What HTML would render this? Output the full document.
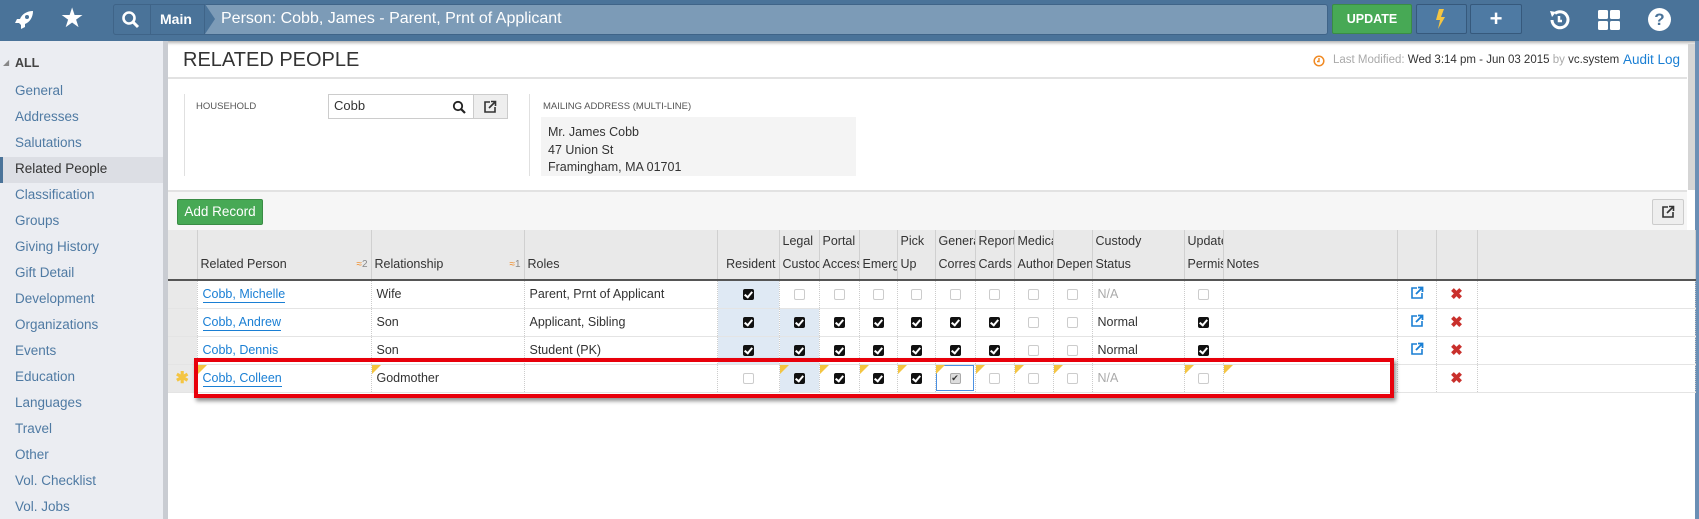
<!DOCTYPE html>
<html><head><meta charset="utf-8">
<style>
*{box-sizing:border-box;margin:0;padding:0}
body{width:1699px;height:519px;overflow:hidden;background:#fff;font-family:"Liberation Sans",sans-serif;font-size:12px;color:#333;position:relative}
.abs{position:absolute}
#top{left:0;top:0;width:1699px;height:41px;background:#4a7399;box-shadow:0 2px 3px rgba(0,0,0,.3)}
#crumb{left:113px;top:4px;width:1215px;height:31px;background:#7c9bb7;border:1px solid #3f6488;border-radius:3px}
#side{left:0;top:41px;width:163px;height:478px;background:#ebedf2}
#sideb{left:163px;top:41px;width:5px;height:478px;background:#c9ccd2}
.si{position:absolute;left:15px;font-size:13.5px;color:#4f7aa3}
table{border-collapse:collapse;table-layout:fixed;position:absolute;left:168px;top:230px;width:1527px}
td{height:28px;border-right:1px dotted #ccc;border-bottom:1px solid #e4e4e4;font-size:12.5px;padding:0 5px;white-space:nowrap;overflow:hidden;position:relative}
th{height:48px;background:#e9e9e9;border-right:1px solid #d0d0d0;font-weight:normal;font-size:12.5px;text-align:left;vertical-align:bottom;padding:0 3px 3px;line-height:23px;white-space:nowrap;overflow:hidden;color:#333;border-bottom:2px solid #555}
td.g{background:#e9e9e9}
td.b{background:#dfe9f4}
td.c{text-align:center;padding:0}
.ck{display:inline-block;width:11px;height:11px;border-radius:2px;background:#111;position:relative;vertical-align:middle}
.ck:after{content:"";position:absolute;left:3px;top:1px;width:3px;height:6px;border:solid #fff;border-width:0 2px 2px 0;transform:rotate(40deg)}
.un{display:inline-block;width:11px;height:11px;border-radius:2px;border:1px solid #ccc;background:#fff;vertical-align:middle}
a{color:#1a7fd4;text-decoration:none;border-bottom:1px solid #1a7fd4;padding-bottom:1px}
.tri{position:absolute;left:0;top:0;width:0;height:0;border-top:9px solid #f4c542;border-right:9px solid transparent}
.gr{color:#aaa}
.x{color:#c9302c;font-weight:bold;font-size:15px}
</style></head><body>
<div id="top" class="abs"></div>
<svg class="abs" style="left:13px;top:9px" width="22" height="22" viewBox="0 0 22 22"><path d="M20 2C14 2 9 5 7 10L4 10 2 14 6 14 8 16 8 20 12 18 12 15C17 13 20 8 20 2Z" fill="#fff"/><circle cx="14" cy="8" r="2" fill="#4a7399"/></svg>
<div class="abs" style="left:60px;top:3px;color:#fff;font-size:27px">★</div>
<div id="crumb" class="abs"></div>
<div class="abs" style="left:113px;top:4px;width:92px;height:31px;background:#4a7399;border:1px solid #3f6488;border-radius:3px 0 0 3px"></div>
<div class="abs" style="left:150px;top:5px;width:1px;height:29px;background:#3f6488"></div>
<svg class="abs" style="left:121px;top:10px" width="20" height="20" viewBox="0 0 20 20"><circle cx="8" cy="8" r="5.5" stroke="#fff" stroke-width="2.6" fill="none"/><path d="M12 12L17 17" stroke="#fff" stroke-width="3"/></svg>
<div class="abs" style="left:160px;top:11px;color:#fff;font-weight:bold;font-size:14px">Main</div>
<div class="abs" style="left:205px;top:4px;width:0;height:0;border-top:15.5px solid transparent;border-bottom:15.5px solid transparent;border-left:10px solid #4a7399"></div>
<div class="abs" style="left:221px;top:10px;color:#fff;font-size:16px">Person: Cobb, James - Parent, Prnt of Applicant</div>
<div class="abs" style="left:1332px;top:4px;width:80px;height:30px;background:#47a955;border:1px solid #3a8c45;border-radius:2px;color:#fff;font-weight:bold;font-size:12.5px;text-align:center;line-height:28px">UPDATE</div>
<div class="abs" style="left:1416px;top:4px;width:51px;height:30px;background:#4e7aa3;border:1px solid #36597c;border-radius:2px"></div>
<svg class="abs" style="left:1433px;top:9px" width="16" height="20" viewBox="0 0 16 20"><path d="M6 0H11L8 8H12L5 20 7 11H3Z" fill="#f4c542"/></svg>
<div class="abs" style="left:1470px;top:4px;width:52px;height:30px;background:#4e7aa3;border:1px solid #36597c;border-radius:2px;color:#fff;font-size:22px;font-weight:bold;text-align:center;line-height:28px">+</div>
<svg class="abs" style="left:1547px;top:8px" width="24" height="24" viewBox="0 0 24 24"><path d="M5 12A8 8 0 1 0 8 5.5" stroke="#fff" stroke-width="3" fill="none"/><path d="M3 3L9 4 5 9Z" fill="#fff"/><path d="M12 8V13H15" stroke="#fff" stroke-width="2.5" fill="none"/></svg>
<svg class="abs" style="left:1597px;top:9px" width="24" height="22" viewBox="0 0 24 22"><rect x="1" y="1" width="10" height="9" rx="1.5" fill="#fff"/><rect x="13" y="1" width="10" height="9" rx="1.5" fill="#fff"/><rect x="1" y="12" width="10" height="9" rx="1.5" fill="#fff"/><rect x="13" y="12" width="10" height="9" rx="1.5" fill="#fff"/></svg>
<div class="abs" style="left:1648px;top:8px;width:23px;height:23px;border-radius:50%;background:#fff;color:#4a7399;font-weight:bold;font-size:17px;text-align:center;line-height:23px">?</div>

<div id="side" class="abs"></div><div id="sideb" class="abs"></div>
<div class="abs" style="left:0;top:157px;width:163px;height:26px;background:#dcdee4"></div>
<div class="abs" style="left:0;top:157px;width:3px;height:26px;background:#4a7399"></div>
<div class="abs" style="left:3px;top:58px;font-size:8px;color:#888">◢</div>
<div class="si" style="top:56px;color:#444;font-weight:bold;font-size:12.5px">ALL</div>
<div class="si" style="top:83px">General</div>
<div class="si" style="top:109px">Addresses</div>
<div class="si" style="top:135px">Salutations</div>
<div class="si" style="top:161px;color:#333">Related People</div>
<div class="si" style="top:187px">Classification</div>
<div class="si" style="top:213px">Groups</div>
<div class="si" style="top:239px">Giving History</div>
<div class="si" style="top:265px">Gift Detail</div>
<div class="si" style="top:291px">Development</div>
<div class="si" style="top:317px">Organizations</div>
<div class="si" style="top:343px">Events</div>
<div class="si" style="top:369px">Education</div>
<div class="si" style="top:395px">Languages</div>
<div class="si" style="top:421px">Travel</div>
<div class="si" style="top:447px">Other</div>
<div class="si" style="top:473px">Vol. Checklist</div>
<div class="si" style="top:499px">Vol. Jobs</div>

<div class="abs" style="left:183px;top:49px;font-size:20px;color:#333">RELATED PEOPLE</div>
<div class="abs" style="left:168px;top:77px;width:1519px;height:2px;background:#e2e2e2"></div>
<svg class="abs" style="left:1313px;top:55px" width="12" height="12" viewBox="0 0 12 12"><circle cx="6" cy="6" r="4.8" stroke="#f08a24" stroke-width="1.5" fill="none"/><path d="M6 3V6.5H4" stroke="#f08a24" stroke-width="1.4" fill="none"/></svg>
<div class="abs" style="left:1333px;top:54px;font-size:11.5px;color:#aaa">Last Modified: <span style="color:#333">Wed 3:14 pm - Jun 03 2015</span> by <span style="color:#333">vc.system</span></div>
<div class="abs" style="left:1623px;top:52px;font-size:13.5px;color:#1a7fd4">Audit Log</div>
<div class="abs" style="left:1688px;top:44px;width:7px;height:146px;background:#d5d5d5"></div>
<div class="abs" style="left:1695px;top:41px;width:4px;height:478px;background:#6b8fb5"></div>

<div class="abs" style="left:184px;top:94px;width:1px;height:82px;background:#e0e0e0"></div>
<div class="abs" style="left:196px;top:101px;font-size:9.5px;color:#555">HOUSEHOLD</div>
<div class="abs" style="left:328px;top:94px;width:180px;height:25px;border:1px solid #ccc;background:#fff"></div>
<div class="abs" style="left:473px;top:95px;width:34px;height:23px;background:#eee;border-left:1px solid #ccc"></div>
<div class="abs" style="left:334px;top:98px;font-size:13px">Cobb</div>
<svg class="abs" style="left:452px;top:100px" width="14" height="14" viewBox="0 0 14 14"><circle cx="6" cy="6" r="4.2" stroke="#222" stroke-width="1.8" fill="none"/><path d="M9 9L13 13" stroke="#222" stroke-width="2.2"/></svg>
<svg class="abs" style="left:483px;top:100px" width="14" height="14" viewBox="0 0 14 14"><path d="M7 2H2V12H12V7" stroke="#333" stroke-width="1.6" fill="none"/><path d="M6 8L12 2M8 1.5H12.5V6" stroke="#333" stroke-width="1.6" fill="none"/></svg>
<div class="abs" style="left:529px;top:94px;width:1px;height:82px;background:#e0e0e0"></div>
<div class="abs" style="left:543px;top:101px;font-size:9.5px;color:#555">MAILING ADDRESS (MULTI-LINE)</div>
<div class="abs" style="left:541px;top:117px;width:315px;height:59px;background:#f4f4f4"></div>
<div class="abs" style="left:548px;top:124px;font-size:12.5px;line-height:17.5px;color:#333">Mr. James Cobb<br>47 Union St<br>Framingham, MA 01701</div>

<div class="abs" style="left:168px;top:190px;width:1519px;height:40px;background:#f6f6f6;border-top:2px solid #e2e2e2"></div>
<div class="abs" style="left:177px;top:199px;width:86px;height:26px;background:#47a955;border:1px solid #3a8c45;border-radius:2px;color:#fff;font-size:13.5px;text-align:center;line-height:24px">Add Record</div>
<div class="abs" style="left:1652px;top:199px;width:32px;height:26px;background:#eee;border:1px solid #ccc;border-radius:2px"></div>
<svg class="abs" style="left:1661px;top:205px" width="14" height="14" viewBox="0 0 14 14"><path d="M7 2H2V12H12V7" stroke="#333" stroke-width="1.6" fill="none"/><path d="M6 8L12 2M8 1.5H12.5V6" stroke="#333" stroke-width="1.6" fill="none"/></svg>

<table>
<colgroup><col style="width:29px"><col style="width:174px"><col style="width:153px"><col style="width:193px"><col style="width:62px"><col style="width:40px"><col style="width:40px"><col style="width:38px"><col style="width:38px"><col style="width:40px"><col style="width:39px"><col style="width:39px"><col style="width:39px"><col style="width:92px"><col style="width:39px"><col style="width:174px"><col style="width:39px"><col style="width:41px"><col style="width:218px"></colgroup>
<tr><th></th><th>Related Person<span style="float:right;color:#f08a24;font-size:10px">≈<span style="color:#888">2</span></span></th><th>Relationship<span style="float:right;color:#f08a24;font-size:10px">≈<span style="color:#888">1</span></span></th><th>Roles</th><th style="text-align:right">Resident</th><th>Legal<br>Custodian</th><th>Portal<br>Access</th><th><br>Emergency</th><th>Pick<br>Up</th><th>General<br>Correspondence</th><th>Report<br>Cards</th><th>Medical<br>Authorization</th><th><br>Dependent</th><th>Custody<br>Status</th><th>Update<br>Permission</th><th><br>Notes</th><th></th><th></th><th></th></tr>
<tr><td class="g"></td><td><a>Cobb, Michelle</a></td><td>Wife</td><td>Parent, Prnt of Applicant</td><td class="c b"><span class="ck"></span></td><td class="c"><span class="un"></span></td><td class="c"><span class="un"></span></td><td class="c"><span class="un"></span></td><td class="c"><span class="un"></span></td><td class="c"><span class="un"></span></td><td class="c"><span class="un"></span></td><td class="c"><span class="un"></span></td><td class="c"><span class="un"></span></td><td class="gr">N/A</td><td class="c"><span class="un"></span></td><td></td><td class="c"><svg width="14" height="14" viewBox="0 0 14 14"><path d="M7 2H2V12H12V7" stroke="#1a7fd4" stroke-width="1.6" fill="none"/><path d="M6 8L12 2M8 1.5H12.5V6" stroke="#1a7fd4" stroke-width="1.8" fill="none"/></svg></td><td class="c x">✖</td><td></td></tr>
<tr><td class="g"></td><td><a>Cobb, Andrew</a></td><td>Son</td><td>Applicant, Sibling</td><td class="c b"><span class="ck"></span></td><td class="c b"><span class="ck"></span></td><td class="c"><span class="ck"></span></td><td class="c"><span class="ck"></span></td><td class="c"><span class="ck"></span></td><td class="c"><span class="ck"></span></td><td class="c"><span class="ck"></span></td><td class="c"><span class="un"></span></td><td class="c"><span class="un"></span></td><td>Normal</td><td class="c"><span class="ck"></span></td><td></td><td class="c"><svg width="14" height="14" viewBox="0 0 14 14"><path d="M7 2H2V12H12V7" stroke="#1a7fd4" stroke-width="1.6" fill="none"/><path d="M6 8L12 2M8 1.5H12.5V6" stroke="#1a7fd4" stroke-width="1.8" fill="none"/></svg></td><td class="c x">✖</td><td></td></tr>
<tr><td class="g"></td><td><a>Cobb, Dennis</a></td><td>Son</td><td>Student (PK)</td><td class="c b"><span class="ck"></span></td><td class="c b"><span class="ck"></span></td><td class="c"><span class="ck"></span></td><td class="c"><span class="ck"></span></td><td class="c"><span class="ck"></span></td><td class="c"><span class="ck"></span></td><td class="c"><span class="ck"></span></td><td class="c"><span class="un"></span></td><td class="c"><span class="un"></span></td><td>Normal</td><td class="c"><span class="ck"></span></td><td></td><td class="c"><svg width="14" height="14" viewBox="0 0 14 14"><path d="M7 2H2V12H12V7" stroke="#1a7fd4" stroke-width="1.6" fill="none"/><path d="M6 8L12 2M8 1.5H12.5V6" stroke="#1a7fd4" stroke-width="1.8" fill="none"/></svg></td><td class="c x">✖</td><td></td></tr>
<tr><td class="g c" style="color:#f4c542;font-size:16px;font-weight:bold">✱</td><td><span class="tri"></span><a>Cobb, Colleen</a></td><td><span class="tri"></span>Godmother</td><td></td><td class="c"><span class="un"></span></td><td class="c b"><span class="tri"></span><span class="ck"></span></td><td class="c"><span class="tri"></span><span class="ck"></span></td><td class="c"><span class="tri"></span><span class="ck"></span></td><td class="c"><span class="tri"></span><span class="ck"></span></td><td class="c" style="outline:1px solid #4a90e2;outline-offset:-2px"><span class="tri"></span><span class="un" style="background:#ddd;border-color:#aaa;font-size:9px;line-height:9px">✔</span></td><td class="c"><span class="tri"></span><span class="un"></span></td><td class="c"><span class="tri"></span><span class="un"></span></td><td class="c"><span class="tri"></span><span class="un"></span></td><td class="gr">N/A</td><td class="c"><span class="tri"></span><span class="un"></span></td><td><span class="tri"></span></td><td></td><td class="c x">✖</td><td></td></tr>
</table>
<div class="abs" style="left:194px;top:358px;width:1200px;height:40px;border:4px solid #e8000b;box-shadow:2px 3px 4px rgba(0,0,0,.45)"></div>
</body></html>
